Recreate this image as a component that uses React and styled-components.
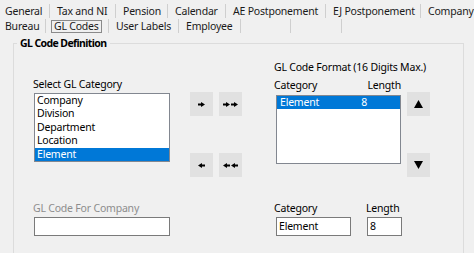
import React from "react";
import styled, { createGlobalStyle } from "styled-components";

const GlobalStyle = createGlobalStyle`
  html, body {
    margin: 0;
    padding: 0;
    background: #f0f0f0;
  }
  body {
    font-family: "Noto Sans", "Open Sans", sans-serif;
    font-size: 10.5px;
    letter-spacing: -0.2px;
    color: #000;
  }
`;

const firstRow = [
    ["General", 50], ["Tax and NI", 66], ["Pension", 52], ["Calendar", 58],
    ["AE Postponement", 100], ["EJ Postponement", 95], ["Company", 60],
];
const secondRow = [
    ["Bureau", 46], ["GL Codes", 63], ["User Labels", 70], ["Employee", 62], ["", 50], ["", 51],
];
const categories = ["Company", "Division", "Department", "Location", "Element"];

/* App
 *
 * GL Codes tab of a payroll settings dialog.
 */
const App = () => {
  return <Window>
      <GlobalStyle />
      <TabStrip>
          <TabRow>
              {firstRow.map(([t, w]) => <Tab key={t} width={w}>{t}</Tab>)}
          </TabRow>
          <TabRow>
              {secondRow.map(([t, w], i) => <Tab key={i} width={w}>
                  {t === "GL Codes" ? <FocusBox>{t}</FocusBox> : t}
              </Tab>)}
          </TabRow>
      </TabStrip>
      <Page>
          <Group>
              <Legend>GL Code Definition</Legend>
              <TopSection>
                  <Column width={136} top={27}>
                      <FieldLabel shift={-1}>Select GL Category</FieldLabel>
                      <ListBox>
                          {categories.map((c) => <ListItem key={c} selected={c === "Element"}>{c}</ListItem>)}
                      </ListBox>
                  </Column>
                  <ButtonColumn left={20}>
                      <ButtonRow>
                          <ArrowButton><Arrow /></ArrowButton>
                          <ArrowButton><Arrow /><Arrow /></ArrowButton>
                      </ButtonRow>
                      <ButtonRow>
                          <ArrowButton><Arrow flip /></ArrowButton>
                          <ArrowButton><Arrow flip /><Arrow flip /></ArrowButton>
                      </ButtonRow>
                  </ButtonColumn>
                  <Column width={125} left={34} top={10}>
                      <FieldLabel shift={-2}>GL Code Format (16 Digits Max.)</FieldLabel>
                      <HeaderRow>
                          <span>Category</span>
                          <span>Length</span>
                      </HeaderRow>
                      <ListBox>
                          <FormatItem selected>
                              <span>Element</span>
                              <span>8</span>
                          </FormatItem>
                      </ListBox>
                  </Column>
                  <ButtonColumn left={6}>
                      <ArrowButton><Triangle /></ArrowButton>
                      <ArrowButton><Triangle down /></ArrowButton>
                  </ButtonColumn>
              </TopSection>
              <BottomSection>
                  <Column width={136}>
                      <FieldLabel shift={-1} disabled>GL Code For Company</FieldLabel>
                      <TextBox />
                  </Column>
                  <Column width={75} left={106}>
                      <FieldLabel shift={-2}>Category</FieldLabel>
                      <TextBox>Element</TextBox>
                  </Column>
                  <Column width={35} left={16}>
                      <FieldLabel shift={-1}>Length</FieldLabel>
                      <TextBox>8</TextBox>
                  </Column>
              </BottomSection>
          </Group>
      </Page>
  </Window>;
};

const Arrow = ({flip}) => (
    <svg width="7" height="5" viewBox="0 0 7 5" style={{transform: flip ? "scaleX(-1)" : "none"}}>
        <rect x="0" y="1.5" width="3" height="2" fill="#000" />
        <polygon points="3,0 7,2.5 3,5" fill="#000" />
    </svg>
);

const Triangle = ({down}) => (
    <svg width="9" height="8" viewBox="0 0 9 8">
        <polygon points={down ? "0,0 9,0 4.5,8" : "4.5,0 9,8 0,8"} fill="#000" />
    </svg>
);

const Window = styled.div`
  width: 474px;
  height: 253px;
  overflow: hidden;
  background: #f0f0f0;
`;
const TabStrip = styled.div`
  display: flex;
  flex-direction: column;
  padding-top: 3px;
`;
const TabRow = styled.div`
  display: flex;
  height: 15px;
  align-items: center;
`;
const Tab = styled.div`
  box-sizing: border-box;
  width: ${(p) => p.width}px;
  height: 14px;
  line-height: 14px;
  padding-left: 7px;
  white-space: nowrap;
  border-right: 1px solid #cfcfcf;
  color: #1a1a1a;
  flex-shrink: 0;
  &:first-child {
    padding-left: 5px;
  }
`;
const FocusBox = styled.span`
  display: inline-block;
  margin-left: -2px;
  padding: 0 2px;
  line-height: 11px;
  border: 1px solid #8a8a8a;
`;
const Page = styled.div`
  padding: 4px 0 0 13px;
`;
const Group = styled.fieldset`
  margin: 0;
  width: 451px;
  height: 240px;
  box-sizing: border-box;
  border: 1px solid #dcdcdc;
  padding: 0 0 0 20px;
`;
const Legend = styled.legend`
  font-weight: bold;
  letter-spacing: -0.6px;
  padding: 0 3px;
  margin-left: -17px;
  line-height: 13px;
`;
const TopSection = styled.div`
  display: flex;
  align-items: flex-start;
`;
const BottomSection = styled.div`
  display: flex;
  align-items: flex-start;
  margin-top: 24px;
`;
const Column = styled.div`
  display: flex;
  flex-direction: column;
  width: ${(p) => p.width}px;
  margin-left: ${(p) => p.left || 0}px;
  margin-top: ${(p) => p.top || 0}px;
  flex-shrink: 0;
`;
const FieldLabel = styled.div`
  line-height: 14px;
  height: 14px;
  white-space: nowrap;
  margin: 0 0 2px ${(p) => p.shift || 0}px;
  color: ${(p) => p.disabled ? "#8d8d8d" : "#000"};
`;
const HeaderRow = styled.div`
  display: flex;
  justify-content: space-between;
  line-height: 14px;
  height: 14px;
  margin: 2px 0 3px -2px;
`;
const ListBox = styled.div`
  height: 69px;
  box-sizing: border-box;
  border: 1px solid #828790;
  background: #fff;
  display: flex;
  flex-direction: column;
`;
const ListItem = styled.div`
  line-height: 13.4px;
  height: 13.4px;
  padding-left: 2px;
  background: ${(p) => p.selected ? "#0078d7" : "transparent"};
  color: ${(p) => p.selected ? "#fff" : "#000"};
`;
const FormatItem = styled(ListItem)`
  display: flex;
  justify-content: space-between;
  padding: 0 33px 0 3px;
`;
const ButtonColumn = styled.div`
  display: flex;
  flex-direction: column;
  justify-content: space-between;
  height: 85px;
  margin-left: ${(p) => p.left}px;
  margin-top: 42px;
  flex-shrink: 0;
`;
const ButtonRow = styled.div`
  display: flex;
  gap: 6px;
`;
const ArrowButton = styled.div`
  width: 23px;
  height: 24px;
  background: #e1e1e1;
  display: flex;
  align-items: center;
  justify-content: center;
  gap: 1px;
`;
const TextBox = styled.div`
  height: 19px;
  line-height: 17px;
  box-sizing: border-box;
  border: 1px solid #7a7a7a;
  background: #fff;
  padding-left: 2px;
`;

export default App;
